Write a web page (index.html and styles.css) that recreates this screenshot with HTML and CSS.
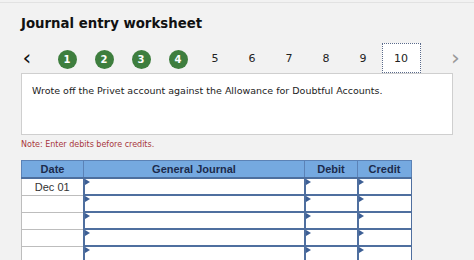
FILE: index.html
```html
<!DOCTYPE html>
<html lang="en">
<head>
    <meta charset="UTF-8">
    <title>Journal entry worksheet</title>
    <link rel="stylesheet" href="styles.css">
</head>
<body>
    <div class="worksheet">
        <h1>Journal entry worksheet</h1>

        <!-- Navegación de pasos -->
        <div class="steps">
            <span class="arrow prev">&lsaquo;</span>
            <span class="step"><span class="done">1</span></span>
            <span class="step"><span class="done">2</span></span>
            <span class="step"><span class="done">3</span></span>
            <span class="step"><span class="done">4</span></span>
            <span class="step">5</span>
            <span class="step">6</span>
            <span class="step">7</span>
            <span class="step">8</span>
            <span class="step">9</span>
            <span class="step active">10</span>
            <span class="arrow next">&rsaquo;</span>
        </div>

        <div class="description">
            Wrote off the Privet account against the Allowance for Doubtful Accounts.
        </div>

        <p class="note">Note: Enter debits before credits.</p>

        <table class="journal">
            <thead>
                <tr>
                    <th class="col-date">Date</th>
                    <th class="col-account">General Journal</th>
                    <th class="col-debit">Debit</th>
                    <th class="col-credit">Credit</th>
                </tr>
            </thead>
            <tbody>
                <tr>
                    <td class="date">Dec 01</td>
                    <td class="entry"></td>
                    <td class="entry"></td>
                    <td class="entry"></td>
                </tr>
                <tr>
                    <td class="date"></td>
                    <td class="entry"></td>
                    <td class="entry"></td>
                    <td class="entry"></td>
                </tr>
                <tr>
                    <td class="date"></td>
                    <td class="entry"></td>
                    <td class="entry"></td>
                    <td class="entry"></td>
                </tr>
                <tr>
                    <td class="date"></td>
                    <td class="entry"></td>
                    <td class="entry"></td>
                    <td class="entry"></td>
                </tr>
                <tr>
                    <td class="date"></td>
                    <td class="entry"></td>
                    <td class="entry"></td>
                    <td class="entry"></td>
                </tr>
            </tbody>
        </table>
    </div>
</body>
</html>
```

FILE: styles.css
```css
/* Estilos generales */
body {
    margin: 0;
    background-color: #f2f2f2;
    font-family: 'DejaVu Sans', Verdana, sans-serif;
    color: #222;
    overflow: hidden;
}

.worksheet {
    border-top: 1px solid #e2e2e2;
    margin-top: 2px;
    padding: 0 21px;
}

h1 {
    margin: 11px 0 0;
    font-size: 13.3px;
    line-height: 20px;
    font-weight: bold;
    color: #111;
}

/* Pasos */
.steps {
    display: flex;
    align-items: center;
    height: 30px;
    margin: 9px 0 0 -4px;
    font-size: 11px;
}

.steps > span {
    flex: none;
}

.arrow {
    width: 20px;
    text-align: center;
    font-size: 22px;
    line-height: 30px;
}

.prev {
    color: #111;
    margin-right: 11.5px;
}

.next {
    color: #999;
    margin-left: 25px;
}

.step {
    width: 37px;
    display: flex;
    justify-content: center;
    align-items: center;
    color: #222;
}

.done {
    width: 19px;
    height: 19px;
    border-radius: 50%;
    background-color: #3e7e3e;
    color: white;
    font-weight: bold;
    font-size: 10px;
    display: flex;
    justify-content: center;
    align-items: center;
    margin-top: 2px;
}

.step.active {
    height: 28px;
    border: 1px dotted #5a6a8a;
    background-color: white;
}

/* Enunciado */
.description {
    height: 50px;
    padding: 10px 10px 0;
    background-color: white;
    border: 1px solid #cfcfcf;
    font-size: 9.5px;
    line-height: 14px;
    color: #222;
}

.note {
    margin: 3px 0 0;
    font-size: 8px;
    line-height: 14px;
    color: #a8373c;
}

/* Tabla del diario */
.journal {
    margin-top: 8px;
    border-collapse: collapse;
    font-family: 'Liberation Sans', Arial, sans-serif;
    font-size: 11px;
}

.journal th {
    height: 16px;
    padding: 0;
    background-color: #75a9e0;
    color: #1c2b4c;
    font-weight: bold;
    border: 1px solid #5b82b6;
    border-bottom: 2px solid #4d6f9e;
}

.col-date {
    width: 61px;
}

.col-account {
    width: 220px;
}

.col-debit {
    width: 52px;
}

.col-credit {
    width: 53px;
}

.journal td {
    height: 15px;
    padding: 0;
    background-color: white;
}

.journal td.date {
    border: 1px solid #bdbdbd;
    text-align: center;
    color: #333;
}

.journal td.entry {
    position: relative;
    border-left: 2px solid #4f6f9f;
    border-right: 1px solid #4f6f9f;
    border-top: 2px solid #4f6f9f;
    border-bottom: 1px solid #4f6f9f;
}

/* Marca de celda editable */
.journal td.entry::before {
    content: "";
    position: absolute;
    top: 0;
    left: 0;
    border-top: 3px solid transparent;
    border-bottom: 3px solid transparent;
    border-left: 5px solid #3d5f95;
}
```
